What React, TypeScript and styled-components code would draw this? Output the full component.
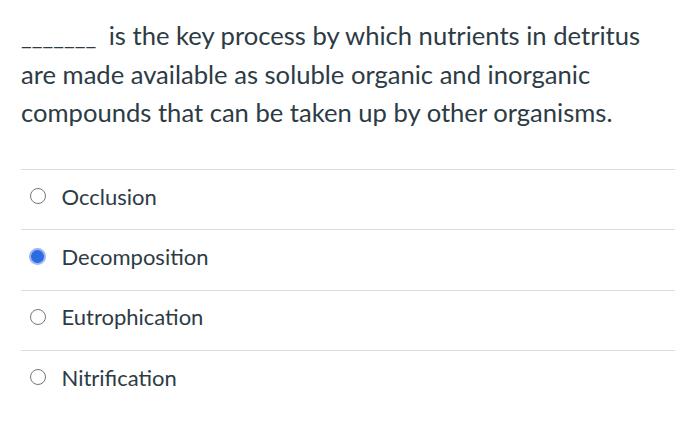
import React from "react";
import styled, { createGlobalStyle } from "styled-components";

const Global = createGlobalStyle`
  html, body { margin: 0; padding: 0; background: #fff; }
  body { font-family: Lato, "Open Sans", sans-serif; color: #2d3b45; }
`;

const Page = styled.div`
  padding: 16px 9px 0 21px;
  width: 684px;
  box-sizing: border-box;
`;

const Question = styled.p`
  margin: 0;
  font-size: 25.6px;
  line-height: 38px;
  color: #2d3b45;
`;

const Blank = styled.span`
  font-size: 23.4px;
  margin-right: 6px;
`;

const Options = styled.div`
  margin-top: 38px;
  display: flex;
  flex-direction: column;
`;

const Row = styled.label`
  display: flex;
  align-items: center;
  height: 60.4px;
  border-top: 1px solid #dcdcdc;
  box-sizing: border-box;
  padding: 0 0 7px 8px;
  gap: 16px;
`;

const Radio = styled.span<{ $checked?: boolean }>`
  width: ${(p) => (p.$checked ? "17px" : "16px")};
  height: ${(p) => (p.$checked ? "17px" : "16px")};
  margin-left: ${(p) => (p.$checked ? "0" : "0.5px")};
  margin-right: ${(p) => (p.$checked ? "-0.5px" : "0")};
  border-radius: 50%;
  box-sizing: border-box;
  flex: none;
  border: ${(p) => (p.$checked ? "2px solid #9db6ee" : "1.5px solid #777")};
  background: ${(p) => (p.$checked ? "#2e6be3" : "#fff")};
`;

const OptionText = styled.span`
  font-size: 22px;
  color: #2d3b45;
`;

const options = [
  { label: "Occlusion", checked: false },
  { label: "Decomposition", checked: true },
  { label: "Eutrophication", checked: false },
  { label: "Nitrification", checked: false },
];

export default function App() {
  return (
    <>
      <Global />
      <Page>
        <Question>
          <Blank>_______</Blank> is the key process by which nutrients in
          detritus are made available as soluble organic and inorganic
          compounds that can be taken up by other organisms.
        </Question>
        <Options>
          {options.map((o) => (
            <Row key={o.label}>
              <Radio $checked={o.checked} />
              <OptionText>{o.label}</OptionText>
            </Row>
          ))}
        </Options>
      </Page>
    </>
  );
}
